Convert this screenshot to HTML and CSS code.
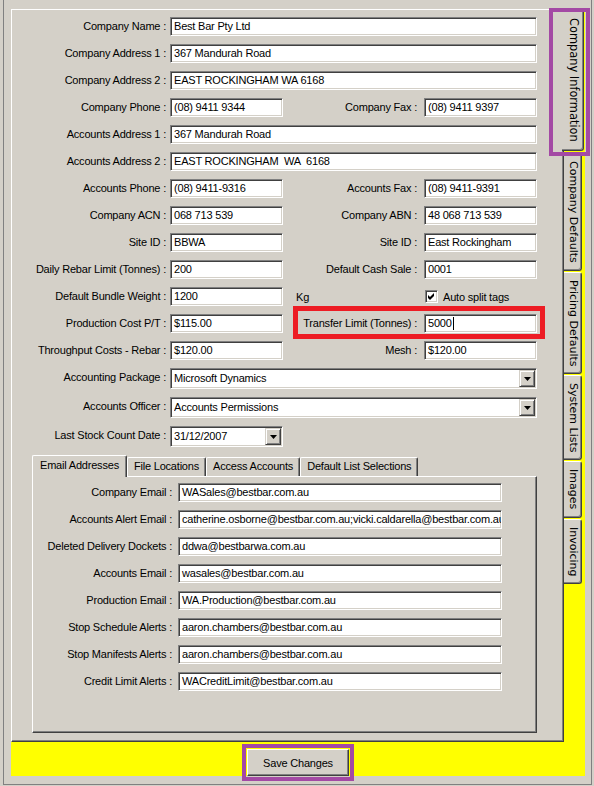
FILE: index.html
```html
<!DOCTYPE html>
<html>
<head>
<meta charset="utf-8">
<title>Company Information</title>
<link rel="stylesheet" href="styles.css">
</head>
<body>
<div class="frame">
  <div class="tabctl">
    <div class="tabtop">
      <div class="panel">
        <div class="form">
          <div class="lbl">Company Name :</div><div class="fld wide">Best Bar Pty Ltd</div>
          <div class="lbl">Company Address 1 :</div><div class="fld wide">367 Mandurah Road</div>
          <div class="lbl">Company Address 2 :</div><div class="fld wide">EAST ROCKINGHAM WA 6168</div>
          <div class="lbl">Company Phone :</div><div class="fld">(08) 9411 9344</div><div class="lbl r">Company Fax :</div><div class="fld">(08) 9411 9397</div>
          <div class="lbl">Accounts Address 1 :</div><div class="fld wide">367 Mandurah Road</div>
          <div class="lbl">Accounts Address 2 :</div><div class="fld wide">EAST ROCKINGHAM  WA  6168</div>
          <div class="lbl">Accounts Phone :</div><div class="fld">(08) 9411-9316</div><div class="lbl r">Accounts Fax :</div><div class="fld">(08) 9411-9391</div>
          <div class="lbl">Company ACN :</div><div class="fld">068 713 539</div><div class="lbl r">Company ABN :</div><div class="fld">48 068 713 539</div>
          <div class="lbl">Site ID :</div><div class="fld">BBWA</div><div class="lbl r">Site ID :</div><div class="fld">East Rockingham</div>
          <div class="lbl">Daily Rebar Limit (Tonnes) :</div><div class="fld">200</div><div class="lbl r">Default Cash Sale :</div><div class="fld">0001</div>
          <div class="lbl">Default Bundle Weight :</div><div class="fld">1200</div><div class="unit">Kg</div>
          <div class="chk"><span class="box"><svg width="9" height="9" viewBox="0 0 9 9"><path d="M1 3 L3 5 L7 1 L7 4 L3 8 L1 6 Z" fill="#000"/></svg></span><span>Auto split tags</span></div>
          <div class="lbl">Production Cost P/T :</div><div class="fld">$115.00</div><div class="lbl r hl">Transfer Limit (Tonnes) :<span class="redbox"></span></div><div class="fld">5000<span class="caret"></span></div>
          <div class="lbl">Throughput Costs - Rebar :</div><div class="fld">$120.00</div><div class="lbl r">Mesh :</div><div class="fld">$120.00</div>
          <div class="lbl">Accounting Package :</div><div class="fld combo wide"><span class="ctext">Microsoft Dynamics</span><span class="ddbtn"><svg width="7" height="4" viewBox="0 0 7 4"><polygon points="0,0 7,0 3.5,4" fill="#000"/></svg></span></div>
          <div class="lbl">Accounts Officer :</div><div class="fld combo wide"><span class="ctext">Accounts Permissions</span><span class="ddbtn"><svg width="7" height="4" viewBox="0 0 7 4"><polygon points="0,0 7,0 3.5,4" fill="#000"/></svg></span></div>
          <div class="lbl">Last Stock Count Date :</div><div class="fld combo"><span class="ctext">31/12/2007</span><span class="ddbtn"><svg width="7" height="4" viewBox="0 0 7 4"><polygon points="0,0 7,0 3.5,4" fill="#000"/></svg></span></div>
        </div>

        <div class="subtabs">
          <div class="stab sel">Email Addresses</div>
          <div class="stab">File Locations</div>
          <div class="stab">Access Accounts</div>
          <div class="stab">Default List Selections</div>
        </div>
        <div class="subpanel">
          <div class="eform">
            <div class="lbl">Company Email :</div><div class="fld">WASales@bestbar.com.au</div>
            <div class="lbl">Accounts Alert Email :</div><div class="fld">catherine.osborne@bestbar.com.au;vicki.caldarella@bestbar.com.au</div>
            <div class="lbl">Deleted Delivery Dockets :</div><div class="fld">ddwa@bestbarwa.com.au</div>
            <div class="lbl">Accounts Email :</div><div class="fld">wasales@bestbar.com.au</div>
            <div class="lbl">Production Email :</div><div class="fld">WA.Production@bestbar.com.au</div>
            <div class="lbl">Stop Schedule Alerts :</div><div class="fld">aaron.chambers@bestbar.com.au</div>
            <div class="lbl">Stop Manifests Alerts :</div><div class="fld">aaron.chambers@bestbar.com.au</div>
            <div class="lbl">Credit Limit Alerts :</div><div class="fld">WACreditLimit@bestbar.com.au</div>
          </div>
        </div>
      </div>

      <div class="vtabs">
        <div class="vtab sel">Company Information<span class="ring"></span></div>
        <div class="vtab">Company Defaults</div>
        <div class="vtab">Pricing Defaults</div>
        <div class="vtab">System Lists</div>
        <div class="vtab">Images</div>
        <div class="vtab">Invoicing</div>
      </div>
    </div>
    <div class="footer">
      <button class="btn">Save Changes</button>
    </div>
  </div>
</div>
</body>
</html>
```

FILE: styles.css
```css
html, body {
  margin: 0;
  padding: 0;
  background: #D4D0C8;
}
body {
  width: 594px;
  height: 786px;
  overflow: hidden;
  font-family: "Liberation Sans", Arial, sans-serif;
  font-size: 11px;
  letter-spacing: -0.2px;
  color: #000;
}
.frame {
  margin-left: 3px;
  width: 589px;
  height: 785px;
  box-sizing: border-box;
  border-left: 1px solid #808080;
  border-right: 1px solid #808080;
  border-bottom: 1px solid #808080;
  padding: 9px 0 0 7px;
}
.tabctl {
  width: 574px;
  height: 767px;
  background: #FFFF00;
  display: flex;
  flex-direction: column;
}
.tabtop {
  display: flex;
  height: 733px;
}
.panel {
  width: 553px;
  height: 733px;
  box-sizing: border-box;
  background: #D4D0C8;
  border: 1px solid;
  border-color: #FFFFFF #404040 #404040 #FFFFFF;
  box-shadow: inset -1px -1px #808080;
  padding-top: 7px;
}
.form {
  display: grid;
  grid-template-columns: 158px 113px 141px 113px;
  grid-template-rows: repeat(13, 19px) repeat(3, 21px);
  row-gap: 8px;
}
.lbl {
  text-align: right;
  padding-right: 4px;
  line-height: 19px;
  white-space: nowrap;
}
.lbl.r {
  padding-right: 7px;
}
.hl {
  position: relative;
}
.redbox {
  position: absolute;
  left: 10px;
  top: -8px;
  width: 252px;
  height: 33px;
  box-sizing: border-box;
  border: 5px solid #ED1C24;
  pointer-events: none;
}
.fld {
  height: 19px;
  box-sizing: border-box;
  background: #FFFFFF;
  border: 1px solid;
  border-color: #808080 #FFFFFF #FFFFFF #808080;
  box-shadow: inset 1px 1px #404040, inset -1px -1px #D4D0C8;
  padding: 0 2px 0 3px;
  line-height: 17px;
  white-space: pre;
  overflow: hidden;
}
.wide {
  grid-column: 2 / 5;
}
.caret {
  display: inline-block;
  width: 1px;
  height: 13px;
  background: #000;
  vertical-align: -3px;
  margin-left: 1px;
}
.combo {
  height: 21px;
  display: flex;
  padding: 1px 1px 1px 3px;
}
.ctext {
  flex: 1;
  line-height: 17px;
  overflow: hidden;
}
.ddbtn {
  width: 16px;
  height: 17px;
  box-sizing: border-box;
  background: #D4D0C8;
  border: 1px solid;
  border-color: #D4D0C8 #404040 #404040 #D4D0C8;
  box-shadow: inset 1px 1px #FFFFFF, inset -1px -1px #808080;
  display: flex;
  align-items: center;
  justify-content: center;
}
.unit {
  padding-left: 13px;
  line-height: 20px;
}
.chk {
  display: flex;
  align-items: center;
  gap: 5px;
  padding-left: 1px;
}
.box {
  width: 13px;
  height: 13px;
  box-sizing: border-box;
  background: #FFFFFF;
  border: 1px solid;
  border-color: #808080 #FFFFFF #FFFFFF #808080;
  box-shadow: inset 1px 1px #404040, inset -1px -1px #D4D0C8;
  display: flex;
  align-items: center;
  justify-content: center;
}

/* inner tabs */
.subtabs {
  display: flex;
  align-items: flex-end;
  margin: 8px 0 0 20px;
  height: 21px;
}
.stab {
  height: 19px;
  box-sizing: border-box;
  padding: 0 6px;
  line-height: 17px;
  border-top: 1px solid #FFFFFF;
  border-left: 1px solid #FFFFFF;
  border-right: 1px solid #404040;
  box-shadow: inset -1px 0 #808080;
  border-radius: 2px 2px 0 0;
  white-space: nowrap;
  background: #D4D0C8;
}
.stab.sel {
  height: 22px;
  margin-bottom: -1px;
  padding: 1px 7px 0;
  position: relative;
  z-index: 1;
}
.subpanel {
  margin-left: 20px;
  width: 505px;
  height: 257px;
  box-sizing: border-box;
  border: 1px solid;
  border-color: #FFFFFF #404040 #404040 #FFFFFF;
  box-shadow: inset -1px -1px #808080;
  padding-top: 6px;
}
.eform {
  display: grid;
  grid-template-columns: 145px 324px;
  grid-auto-rows: 19px;
  row-gap: 8px;
}
.eform .lbl {
  padding-right: 6px;
}

/* vertical tabs */
.vtabs {
  width: 21px;
  display: flex;
  flex-direction: column;
  gap: 1px;
}
.vtab {
  width: 18px;
  box-sizing: border-box;
  writing-mode: vertical-rl;
  font-family: "DejaVu Sans", sans-serif;
  font-size: 11px;
  letter-spacing: 0;
  line-height: 16px;
  padding: 7px 0;
  background: #D4D0C8;
  border-top: 1px solid #FFFFFF;
  border-right: 1px solid #404040;
  border-bottom: 1px solid #404040;
  box-shadow: inset -1px -1px #808080;
  border-radius: 0 3px 3px 0;
  white-space: nowrap;
}
.vtab.sel {
  position: relative;
  width: 22px;
  margin-left: -2px;
  padding: 8px 0;
  margin-bottom: 1px;
  font-size: 11.4px;
  line-height: 18px;
  z-index: 1;
}
.ring {
  position: absolute;
  left: -13px;
  top: -2px;
  width: 41px;
  height: 148px;
  box-sizing: border-box;
  border: 4px solid #A349A4;
  pointer-events: none;
}

/* footer */
.footer {
  height: 34px;
  display: flex;
  justify-content: center;
  align-items: flex-end;
}
.btn {
  width: 102px;
  height: 27px;
  box-sizing: border-box;
  margin: 0;
  padding: 0;
  font-family: "Liberation Sans", Arial, sans-serif;
  font-size: 11px;
  letter-spacing: -0.2px;
  color: #000;
  background: #D4D0C8;
  border: 1px solid;
  border-color: #FFFFFF #404040 #404040 #FFFFFF;
  box-shadow: inset -1px -1px #808080;
  border-radius: 0;
  outline: 4px solid #A349A4;
  outline-offset: 1px;
}
```
